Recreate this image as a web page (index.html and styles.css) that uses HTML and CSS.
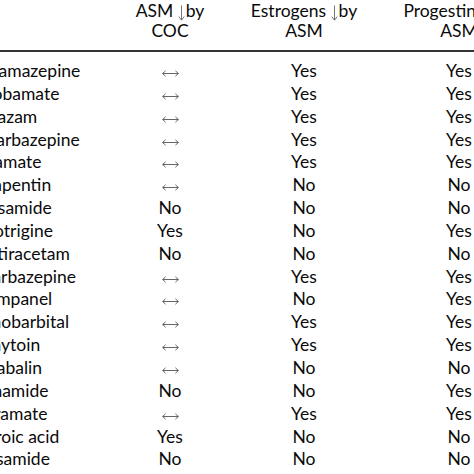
FILE: index.html
```html
<!DOCTYPE html>
<html>
<head>
<meta charset="utf-8">
<link rel="stylesheet" href="styles.css">
</head>
<body>
<div class="viewport">
  <div class="table">
    <div class="head">
      <div class="h name"></div>
      <div class="h c2">ASM <svg class="darr" width="7" height="16" viewBox="0 0 7 16"><path d="M3.5 0.5V15M0.8 11.5L3.5 15.2L6.2 11.5" fill="none" stroke="#666" stroke-width="0.9"/></svg>by<br>COC</div>
      <div class="h c3">Estrogens <svg class="darr" width="7" height="16" viewBox="0 0 7 16"><path d="M3.5 0.5V15M0.8 11.5L3.5 15.2L6.2 11.5" fill="none" stroke="#666" stroke-width="0.9"/></svg>by<br>ASM</div>
      <div class="h c4">Progestins <svg class="darr" width="7" height="16" viewBox="0 0 7 16"><path d="M3.5 0.5V15M0.8 11.5L3.5 15.2L6.2 11.5" fill="none" stroke="#666" stroke-width="0.9"/></svg>by<br>ASM</div>
    </div>
    <div class="body">
      <div class="row"><div class="name">Carbamazepine</div><div class="c2"><svg class="lr" width="17" height="7" viewBox="0 0 17 7"><path d="M0.8 3.5H16.2M3.6 0.8L0.6 3.5L3.6 6.2M13.4 0.8L16.4 3.5L13.4 6.2" fill="none" stroke="#555" stroke-width="0.9"/></svg></div><div class="c3">Yes</div><div class="c4">Yes</div></div>
      <div class="row"><div class="name">Cenobamate</div><div class="c2"><svg class="lr" width="17" height="7" viewBox="0 0 17 7"><path d="M0.8 3.5H16.2M3.6 0.8L0.6 3.5L3.6 6.2M13.4 0.8L16.4 3.5L13.4 6.2" fill="none" stroke="#555" stroke-width="0.9"/></svg></div><div class="c3">Yes</div><div class="c4">Yes</div></div>
      <div class="row"><div class="name">Clobazam</div><div class="c2"><svg class="lr" width="17" height="7" viewBox="0 0 17 7"><path d="M0.8 3.5H16.2M3.6 0.8L0.6 3.5L3.6 6.2M13.4 0.8L16.4 3.5L13.4 6.2" fill="none" stroke="#555" stroke-width="0.9"/></svg></div><div class="c3">Yes</div><div class="c4">Yes</div></div>
      <div class="row"><div class="name">Eslicarbazepine</div><div class="c2"><svg class="lr" width="17" height="7" viewBox="0 0 17 7"><path d="M0.8 3.5H16.2M3.6 0.8L0.6 3.5L3.6 6.2M13.4 0.8L16.4 3.5L13.4 6.2" fill="none" stroke="#555" stroke-width="0.9"/></svg></div><div class="c3">Yes</div><div class="c4">Yes</div></div>
      <div class="row"><div class="name">Felbamate</div><div class="c2"><svg class="lr" width="17" height="7" viewBox="0 0 17 7"><path d="M0.8 3.5H16.2M3.6 0.8L0.6 3.5L3.6 6.2M13.4 0.8L16.4 3.5L13.4 6.2" fill="none" stroke="#555" stroke-width="0.9"/></svg></div><div class="c3">Yes</div><div class="c4">Yes</div></div>
      <div class="row"><div class="name">Gabapentin</div><div class="c2"><svg class="lr" width="17" height="7" viewBox="0 0 17 7"><path d="M0.8 3.5H16.2M3.6 0.8L0.6 3.5L3.6 6.2M13.4 0.8L16.4 3.5L13.4 6.2" fill="none" stroke="#555" stroke-width="0.9"/></svg></div><div class="c3">No</div><div class="c4">No</div></div>
      <div class="row"><div class="name">Lacosamide</div><div class="c2">No</div><div class="c3">No</div><div class="c4">No</div></div>
      <div class="row"><div class="name">Lamotrigine</div><div class="c2">Yes</div><div class="c3">No</div><div class="c4">Yes</div></div>
      <div class="row"><div class="name">Levetiracetam</div><div class="c2">No</div><div class="c3">No</div><div class="c4">No</div></div>
      <div class="row"><div class="name">Oxcarbazepine</div><div class="c2"><svg class="lr" width="17" height="7" viewBox="0 0 17 7"><path d="M0.8 3.5H16.2M3.6 0.8L0.6 3.5L3.6 6.2M13.4 0.8L16.4 3.5L13.4 6.2" fill="none" stroke="#555" stroke-width="0.9"/></svg></div><div class="c3">Yes</div><div class="c4">Yes</div></div>
      <div class="row"><div class="name">Perampanel</div><div class="c2"><svg class="lr" width="17" height="7" viewBox="0 0 17 7"><path d="M0.8 3.5H16.2M3.6 0.8L0.6 3.5L3.6 6.2M13.4 0.8L16.4 3.5L13.4 6.2" fill="none" stroke="#555" stroke-width="0.9"/></svg></div><div class="c3">No</div><div class="c4">Yes</div></div>
      <div class="row"><div class="name">Phenobarbital</div><div class="c2"><svg class="lr" width="17" height="7" viewBox="0 0 17 7"><path d="M0.8 3.5H16.2M3.6 0.8L0.6 3.5L3.6 6.2M13.4 0.8L16.4 3.5L13.4 6.2" fill="none" stroke="#555" stroke-width="0.9"/></svg></div><div class="c3">Yes</div><div class="c4">Yes</div></div>
      <div class="row"><div class="name">Phenytoin</div><div class="c2"><svg class="lr" width="17" height="7" viewBox="0 0 17 7"><path d="M0.8 3.5H16.2M3.6 0.8L0.6 3.5L3.6 6.2M13.4 0.8L16.4 3.5L13.4 6.2" fill="none" stroke="#555" stroke-width="0.9"/></svg></div><div class="c3">Yes</div><div class="c4">Yes</div></div>
      <div class="row"><div class="name">Pregabalin</div><div class="c2"><svg class="lr" width="17" height="7" viewBox="0 0 17 7"><path d="M0.8 3.5H16.2M3.6 0.8L0.6 3.5L3.6 6.2M13.4 0.8L16.4 3.5L13.4 6.2" fill="none" stroke="#555" stroke-width="0.9"/></svg></div><div class="c3">No</div><div class="c4">No</div></div>
      <div class="row"><div class="name">Rufinamide</div><div class="c2">No</div><div class="c3">No</div><div class="c4">Yes</div></div>
      <div class="row"><div class="name">Topiramate</div><div class="c2"><svg class="lr" width="17" height="7" viewBox="0 0 17 7"><path d="M0.8 3.5H16.2M3.6 0.8L0.6 3.5L3.6 6.2M13.4 0.8L16.4 3.5L13.4 6.2" fill="none" stroke="#555" stroke-width="0.9"/></svg></div><div class="c3">Yes</div><div class="c4">Yes</div></div>
      <div class="row"><div class="name">Valproic acid</div><div class="c2">Yes</div><div class="c3">No</div><div class="c4">No</div></div>
      <div class="row"><div class="name">Zonisamide</div><div class="c2">No</div><div class="c3">No</div><div class="c4">No</div></div>
    </div>
  </div>
</div>
</body>
</html>
```
FILE: styles.css
```css
html, body {
  margin: 0;
  padding: 0;
  background: #fff;
}
.viewport {
  width: 474px;
  height: 474px;
  overflow: hidden;
}
.table {
  margin-left: -38px;
  width: 600px;
  font-family: Lato, "Open Sans", sans-serif;
  font-size: 17.5px;
  color: #0a0a0a;
}
.head, .row {
  display: grid;
}
.row {
  grid-template-columns: 148px 120px 148px 162px;
  line-height: 22.85px;
  height: 22.85px;
}
.head {
  grid-template-columns: 110px 120px 148px 162px;
  margin-left: 38px;
  padding: 1px 0 9px;
  line-height: 20px;
  text-align: center;
  border-bottom: 2px solid #333;
}
.body {
  padding-top: 8px;
}
.row .c2, .row .c3, .row .c4 {
  text-align: center;
}
.darr {
  vertical-align: -4px;
  margin-right: 1px;
}
.lr {
  vertical-align: 0px;
}
```
